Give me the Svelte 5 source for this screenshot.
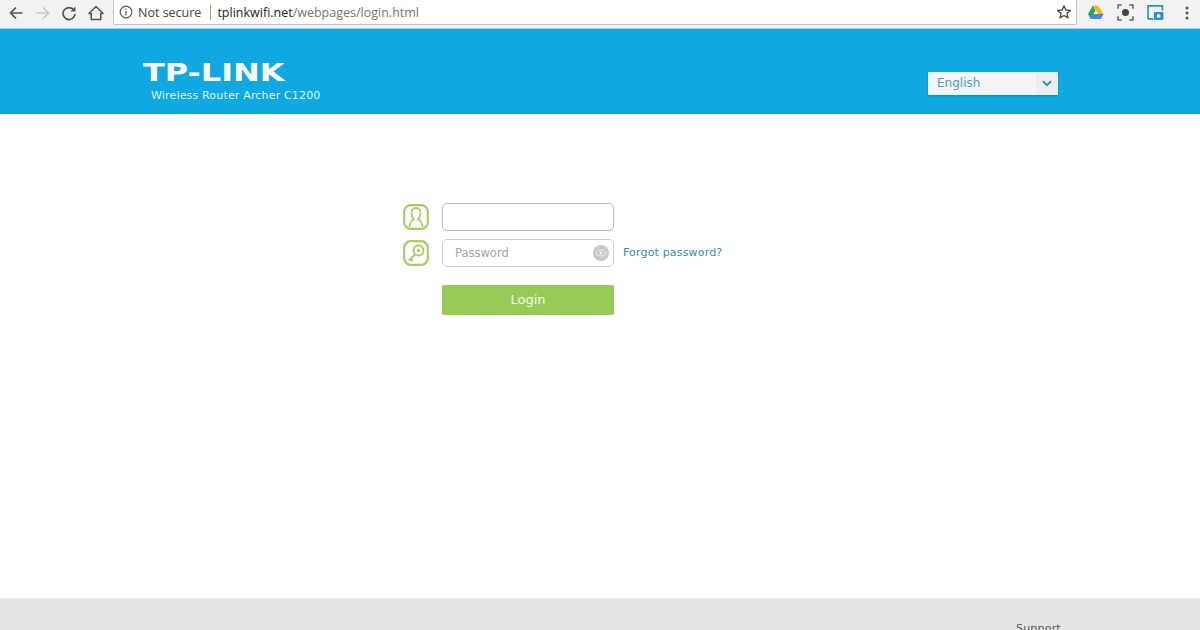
<script lang="ts">
  const url_host = "tplinkwifi.net";
  const url_path = "/webpages/login.html";
  let language = $state("English");
</script>

<div class="page">
  <!-- Browser toolbar -->
  <div class="toolbar">
    <div class="nav">
      <svg class="nav-icon" viewBox="0 0 16 16"><path d="M14.500 8H2.500M8 2.500 2.500 8 8 13.500" fill="none" stroke="#555" stroke-width="1.700" /></svg>
      <svg class="nav-icon" viewBox="0 0 16 16"><path d="M1.500 8h12M8 2.500 13.500 8 8 13.500" fill="none" stroke="#c8c8c8" stroke-width="1.700" /></svg>
      <svg class="nav-icon" viewBox="0 0 16 16"><path d="M13 5.200A6 6 0 1 0 14 9" fill="none" stroke="#555" stroke-width="1.700" /><path d="M14.500 1.500v5h-5z" fill="#555" /></svg>
      <svg class="nav-icon" viewBox="0 0 16 16"><path d="M8 1.500 1 8.500h2.200v6h9.600v-6H15z" fill="none" stroke="#555" stroke-width="1.500" stroke-linejoin="round" /></svg>
    </div>
    <div class="omnibox">
      <svg class="info" viewBox="0 0 14 14"><circle cx="7" cy="7" r="5.800" fill="none" stroke="#555" stroke-width="1.200" /><path d="M7 6v4.200M7 3.600v1.200" stroke="#555" stroke-width="1.300" /></svg>
      <span class="secure">Not secure</span>
      <span class="divider"></span>
      <span class="url"><span class="host">{url_host}</span>{url_path}</span>
      <svg class="star" viewBox="0 0 16 16"><path d="M8 1.800 9.800 6l4.600.4-3.500 3 1.100 4.500L8 11.500l-4 2.400 1.100-4.500-3.500-3L6.200 6z" fill="none" stroke="#444" stroke-width="1.300" stroke-linejoin="round" /></svg>
    </div>
    <div class="extensions">
      <svg class="ext" viewBox="0 0 16 16"><path d="M5.500 1.500 1 9.500l2.500 4.500L8 6z" fill="#1fa463" /><path d="M3.500 14h9.500l2.500-4.500H6z" fill="#4285f4" /><path d="M5.500 1.500h5l5 8h-5z" fill="#f5b915" /></svg>
      <svg class="ext" viewBox="0 0 16 16"><path d="M1 4.500V1h3.500M11.500 1H15v3.500M15 11.500V15h-3.500M4.500 15H1v-3.500" fill="none" stroke="#666" stroke-width="1.500" /><circle cx="8" cy="8" r="3.300" fill="#444" /></svg>
      <svg class="ext" viewBox="0 0 16 16"><path d="M1 14V1.800h13.500V6M1 14h5" fill="none" stroke="#2a8fd8" stroke-width="1.600" /><rect x="6.500" y="7.500" width="9" height="7.500" rx="1" fill="#2a8fd8" /><circle cx="11" cy="11.200" r="1.800" fill="#fff" /></svg>
      <svg class="menu" viewBox="0 0 6 16"><circle cx="3" cy="3" r="1.500" fill="#555" /><circle cx="3" cy="8" r="1.500" fill="#555" /><circle cx="3" cy="13" r="1.500" fill="#555" /></svg>
    </div>
  </div>

  <!-- Router header -->
  <header class="banner">
    <div class="brand">
      <div class="logo"><span>TP-LINK</span></div>
      <div class="model">Wireless Router Archer C1200</div>
    </div>
    <div class="language">
      <span class="language-label">{language}</span>
      <span class="language-arrow">
        <svg viewBox="0 0 10 7"><path d="M1 1.300 5 5.200 9 1.300" fill="none" stroke="#2a94c4" stroke-width="2" /></svg>
      </span>
    </div>
  </header>

  <!-- Login form -->
  <main class="content">
    <form class="login">
      <div class="field-icon">
        <svg viewBox="0 0 26 28">
          <rect x="1.200" y="2.200" width="23.600" height="23.600" rx="6.500" fill="none" stroke="#a3d06a" stroke-width="2.200" />
          <path d="M6.500 24c0-4 1-6 4.500-7.500C9.300 15 8.500 12.500 8.500 10c0-3 1.800-4.800 4.500-4.800s4.500 1.800 4.500 4.800c0 2.500-.8 5-2.500 6.500 3.500 1.500 4.500 3.500 4.500 7.500" fill="none" stroke="#a3d06a" stroke-width="1.700" />
        </svg>
      </div>
      <div class="input"></div>
      <div></div>

      <div class="field-icon">
        <svg viewBox="0 0 26 28">
          <rect x="1.200" y="2.200" width="23.600" height="23.600" rx="6.500" fill="none" stroke="#a3d06a" stroke-width="2.200" />
          <circle cx="15.500" cy="11.500" r="5" fill="none" stroke="#a3d06a" stroke-width="2" />
          <circle cx="15.500" cy="11.500" r="1.800" fill="#a3d06a" />
          <path d="M12 15.500 6 21.500M7.500 20l2 2" fill="none" stroke="#a3d06a" stroke-width="2.200" />
        </svg>
      </div>
      <div class="input password">
        <span class="placeholder">Password</span>
        <span class="eye">
          <svg viewBox="0 0 16 16"><circle cx="8" cy="8" r="8" fill="#c9c9c9" /><ellipse cx="8" cy="8" rx="5" ry="3" fill="none" stroke="#eee" stroke-width="1" /><circle cx="8" cy="8" r="1.500" fill="#eee" /></svg>
        </span>
      </div>
      <span class="forgot">Forgot password?</span>

      <div></div>
      <div class="submit">Login</div>
    </form>
  </main>

  <!-- Footer, cut off by the window -->
  <footer class="footer">
    <span class="support">Support</span>
  </footer>
</div>

<style>
  :global(body) {
    margin: 0;
    overflow: hidden;
  }

  .page {
    width: 1200px;
    height: 630px;
    display: flex;
    flex-direction: column;
    overflow: hidden;
    background: #fff;
    font-family: "DejaVu Sans", Verdana, sans-serif;
  }

  /* ── Toolbar ─────────────────────────────────────────────────────── */

  .toolbar {
    height: 28px;
    flex-shrink: 0;
    display: flex;
    align-items: flex-start;
    background: #f2f2f2;
    border-bottom: 1px solid #a9cfdc;
    box-sizing: content-box;
  }

  .nav {
    width: 113px;
    flex-shrink: 0;
    display: flex;
    gap: 10.500px;
    padding: 5px 0 0 8px;
    box-sizing: border-box;
  }

  .nav-icon {
    width: 16px;
    height: 16px;
  }

  .omnibox {
    width: 964px;
    height: 25px;
    flex-shrink: 0;
    display: flex;
    align-items: center;
    background: #fff;
    border: 1px solid #c4c4c4;
    border-top: 0;
    border-radius: 0 0 2px 2px;
    box-sizing: border-box;
    padding: 0 4px 0 5px;
    font-family: "Open Sans", sans-serif;
    font-size: 12.500px;
    color: #757575;
  }

  .info {
    width: 14px;
    height: 14px;
    margin-right: 5px;
  }

  .secure {
    color: #444;
  }

  .divider {
    width: 1px;
    height: 15px;
    background: #999;
    margin: 0 6px 0 9px;
  }

  .url {
    flex: 1;
  }

  .host {
    color: #222;
  }

  .star {
    width: 16px;
    height: 16px;
  }

  .extensions {
    flex: 1;
    display: flex;
    align-items: center;
    gap: 13px;
    padding: 4px 0 0 10px;
  }

  .ext {
    width: 17px;
    height: 17px;
    flex-shrink: 0;
  }

  .menu {
    width: 6px;
    height: 16px;
    flex-shrink: 0;
    margin-left: 7px;
  }

  /* ── Banner ──────────────────────────────────────────────────────── */

  .banner {
    height: 85px;
    flex-shrink: 0;
    display: flex;
    justify-content: space-between;
    background: #0fa8e0;
    padding: 0 142px 0 143px;
  }

  .brand {
    padding-top: 31px;
  }

  .logo {
    height: 26px;
    color: #fff;
    font-weight: 700;
    font-size: 24px;
    line-height: 26px;
  }

  .logo span {
    display: inline-block;
    transform-origin: 0 50%;
    transform: scaleX(1.33);
  }

  .model {
    margin: 3px 0 0 8px;
    color: #dff3fb;
    font-size: 11px;
    line-height: 14px;
    letter-spacing: 0.17px;
  }

  .language {
    width: 130px;
    height: 23px;
    margin-top: 43px;
    display: flex;
    background: #f4f6f6;
    box-shadow: 0 1px 2px rgba(0, 0, 0, 0.2);
  }

  .language-label {
    flex: 1;
    padding-left: 9px;
    color: #4d9cc4;
    font-size: 12px;
    line-height: 22px;
  }

  .language-arrow {
    width: 22px;
    display: flex;
    align-items: center;
    justify-content: center;
    background: #eeeeee;
  }

  .language-arrow svg {
    width: 10px;
    height: 7px;
  }

  /* ── Login ───────────────────────────────────────────────────────── */

  .content {
    flex: 1;
    padding: 89px 0 0 403px;
  }

  .login {
    display: grid;
    grid-template-columns: 26px 172px auto;
    grid-template-rows: 28px 28px 40px;
    column-gap: 13px;
    row-gap: 8px;
    align-items: center;
  }

  .field-icon {
    height: 28px;
  }

  .field-icon svg {
    width: 26px;
    height: 28px;
    display: block;
  }

  .input {
    height: 28px;
    box-sizing: border-box;
    border: 1px solid #b8b8b8;
    border-radius: 5px;
    background: #fff;
  }

  .password {
    display: flex;
    align-items: center;
    justify-content: space-between;
    padding: 0 4px 0 12px;
    border-color: #cfcfcf;
  }

  .placeholder {
    color: #a4a4a4;
    font-size: 11.500px;
  }

  .eye {
    width: 16px;
    height: 16px;
  }

  .eye svg {
    display: block;
    width: 16px;
    height: 16px;
  }

  .forgot {
    margin-left: -4px;
    margin-top: -2px;
    color: #2f8fa8;
    font-size: 11px;
    letter-spacing: 0.17px;
    white-space: nowrap;
  }

  .submit {
    height: 30px;
    align-self: end;
    background: #97cb56;
    border-radius: 2px;
    color: #f4f9ec;
    font-size: 13px;
    line-height: 30px;
    text-align: center;
  }

  /* ── Footer ──────────────────────────────────────────────────────── */

  .footer {
    height: 32px;
    flex-shrink: 0;
    background: #e4e4e4;
    padding: 24px 0 0 1016px;
    box-sizing: border-box;
  }

  .support {
    color: #555;
    font-size: 11px;
    line-height: 14px;
    display: block;
    letter-spacing: 0.2px;
  }
</style>
